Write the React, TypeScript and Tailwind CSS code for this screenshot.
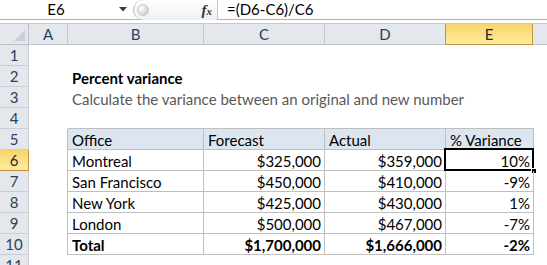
import clsx from "clsx";

const W: Record<string, string> = {
  A: "w-[39px]",
  B: "w-[136px]",
  C: "w-[121px]",
  D: "w-[121px]",
  E: "w-[88px]",
  F: "w-[88px]",
};

const tb = "border-[#bfbfbf]";

interface CellDef {
  text?: string;
  right?: boolean;
  bold?: boolean;
  muted?: boolean;
  head?: boolean;
  boxed?: boolean;
  selected?: boolean;
}

interface RowDef {
  n: number;
  topOfTable?: boolean;
  cells: Record<string, CellDef>;
}

const rows: RowDef[] = [
  { n: 1, cells: {} },
  { n: 2, cells: { B: { text: "Percent variance", bold: true } } },
  { n: 3, cells: { B: { text: "Calculate the variance between an original and new number", muted: true } } },
  { n: 4, topOfTable: true, cells: {} },
  {
    n: 5,
    cells: {
      B: { text: "Office", head: true, boxed: true },
      C: { text: "Forecast", head: true, boxed: true },
      D: { text: "Actual", head: true, boxed: true },
      E: { text: "% Variance", head: true, boxed: true },
    },
  },
  {
    n: 6,
    cells: {
      B: { text: "Montreal", boxed: true },
      C: { text: "$325,000", right: true, boxed: true },
      D: { text: "$359,000", right: true, boxed: true },
      E: { text: "10%", right: true, boxed: true, selected: true },
    },
  },
  {
    n: 7,
    cells: {
      B: { text: "San Francisco", boxed: true },
      C: { text: "$450,000", right: true, boxed: true },
      D: { text: "$410,000", right: true, boxed: true },
      E: { text: "-9%", right: true, boxed: true },
    },
  },
  {
    n: 8,
    cells: {
      B: { text: "New York", boxed: true },
      C: { text: "$425,000", right: true, boxed: true },
      D: { text: "$430,000", right: true, boxed: true },
      E: { text: "1%", right: true, boxed: true },
    },
  },
  {
    n: 9,
    cells: {
      B: { text: "London", boxed: true },
      C: { text: "$500,000", right: true, boxed: true },
      D: { text: "$467,000", right: true, boxed: true },
      E: { text: "-7%", right: true, boxed: true },
    },
  },
  {
    n: 10,
    cells: {
      B: { text: "Total", bold: true, boxed: true },
      C: { text: "$1,700,000", right: true, bold: true, boxed: true },
      D: { text: "$1,666,000", right: true, bold: true, boxed: true },
      E: { text: "-2%", right: true, bold: true, boxed: true },
    },
  },
  { n: 11, cells: {} },
];

const colKeys = ["A", "B", "C", "D", "E", "F"];

function FormulaBar() {
  return (
    <div className="h-[20px] flex border-b border-[#aeb5be] bg-white text-[15px] text-black">
      <div className="w-[112px] flex items-center justify-center">E6</div>
      <div className="w-[21px] flex items-center justify-center">
        <svg width="8" height="5" viewBox="0 0 8 5">
          <path d="M0 0 H8 L4 4.5 Z" fill="#3b3b3b" />
        </svg>
      </div>
      <div className="w-[84px] h-[20px] flex items-center rounded-l-[10px] border-l border-[#b4bbc4] bg-gradient-to-b from-[#ffffff] to-[#eef0f3]">
        <div className="ml-[3px] w-[12px] h-[12px] rounded-full bg-[radial-gradient(circle_at_35%_35%,#ffffff,#b9bec6)] border border-[#c6cbd2]" />
        <div className="flex-1" />
        <span className="mr-[5px] font-['Liberation_Serif',serif] italic font-bold text-[15px] text-[#333]">
          f<span className="text-[11px]">x</span>
        </span>
      </div>
      <div className="w-px bg-[#c4c9d0]" />
      <div className="pl-[9px] flex items-center">=(D6-C6)/C6</div>
    </div>
  );
}

function ColumnHeaders() {
  return (
    <div className="h-[21px] flex">
      <div className="w-[29px] shrink-0 bg-[#e4e7eb] border-r border-b border-[#b8bfc8] relative">
        <svg className="absolute right-[3px] bottom-[3px]" width="11" height="11" viewBox="0 0 11 11">
          <path d="M11 0 V11 H0 Z" fill="#c9ced5" />
        </svg>
      </div>
      {colKeys.map((k) =>
        k === "E" ? (
          <div
            key={k}
            className={clsx(
              W[k],
              "shrink-0 flex items-center justify-center bg-gradient-to-b from-[#f8d46c] to-[#fdec9c] border-r border-b border-[#c7913b] border-l text-[#2a2a2a] -ml-px"
            )}
          >
            {k}
          </div>
        ) : (
          <div
            key={k}
            className={clsx(
              W[k],
              "shrink-0 flex items-center justify-center bg-[#e4e7eb] border-r border-b border-[#c2c8d0] text-[#27415f]"
            )}
          >
            {k}
          </div>
        )
      )}
    </div>
  );
}

function SheetRow({ row }: { row: RowDef }) {
  const sel = row.n === 6;
  return (
    <div className="h-[21px] flex">
      <div
        className={clsx(
          "w-[29px] shrink-0 flex items-center justify-center border-r border-b",
          sel
            ? "bg-gradient-to-b from-[#f8d46c] to-[#fdec9c] border-[#c7913b] text-[#2a2a2a]"
            : "bg-[#e4e7eb] border-[#c9ced5] text-[#27415f]"
        )}
      >
        {row.n}
      </div>
      {colKeys.map((k) => {
        const c = row.cells[k];
        const inTable = row.n >= 5 && row.n <= 10;
        const leftEdge = k === "A" && inTable;
        const topEdge = row.topOfTable && ["B", "C", "D", "E"].includes(k);
        return (
          <div
            key={k}
            className={clsx(
              W[k],
              "shrink-0 h-full relative flex items-end pb-[1px] whitespace-nowrap",
              c?.boxed && "border-r border-b",
              (leftEdge || topEdge) && (leftEdge ? "border-r" : "border-b"),
              tb,
              c?.head && "bg-[#dce6f1]",
              c?.right ? "justify-end pr-[3px]" : "pl-[4px]",
              c?.bold && "font-bold",
              c?.muted ? "text-[#595959]" : "text-black"
            )}
          >
            {c?.text}
            {c?.selected && (
              <>
                <div className="absolute left-[-2px] top-[-2px] right-[-1px] bottom-[-1px] border-2 border-black" />
                <div className="absolute right-[-4px] bottom-[-4px] w-[6px] h-[6px] bg-black border border-white" />
              </>
            )}
          </div>
        );
      })}
    </div>
  );
}

export default function App() {
  return (
    <div className="w-[547px] h-[265px] overflow-hidden bg-white font-['Lato',sans-serif] text-[15px] leading-none">
      <FormulaBar />
      <div className="h-[4px] border-b border-[#c4c9d0]" />
      <ColumnHeaders />
      {rows.map((r) => (
        <SheetRow key={r.n} row={r} />
      ))}
    </div>
  );
}
